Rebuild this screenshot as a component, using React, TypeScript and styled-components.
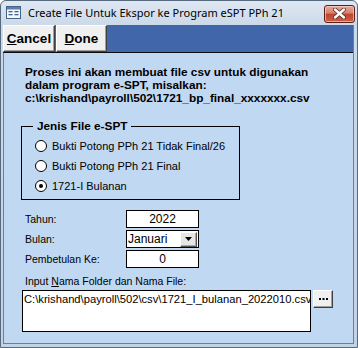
import React from 'react';
import styled, { createGlobalStyle } from 'styled-components';

const Global = createGlobalStyle`
  html, body {
    margin: 0;
    padding: 0;
    background: #ffffff;
  }
  * { box-sizing: border-box; }
`;

const Window = styled.div`
  width: 358px;
  height: 348px;
  border: 1px solid #56697f;
  border-radius: 6px 6px 0 0;
  padding: 0 3px 3px 2px;
  background: linear-gradient(180deg, #dfe8f3 0px, #cbd9e8 24px, #c3d3e4 100%);
  display: flex;
  flex-direction: column;
  font-family: "Liberation Sans", Arial, sans-serif;
`;

const TitleBar = styled.div`
  height: 24px;
  display: flex;
  align-items: center;
  padding: 0 0 1px 3px;
`;

const TitleText = styled.span`
  font-family: "Noto Sans", "Open Sans", sans-serif;
  font-size: 11px;
  color: #000;
  margin-left: 7px;
  flex: 1;
  white-space: nowrap;
`;

const CloseButton = styled.div`
  width: 31px;
  height: 18px;
  margin-top: 2px;
  margin-right: -1px;
  border: 1px solid #5b2019;
  border-radius: 3px;
  background: linear-gradient(180deg, #e8a89a 0%, #d6806f 45%, #c0432e 50%, #cf5e48 100%);
  box-shadow: inset 0 0 0 1px rgba(255, 220, 210, 0.6);
  display: flex;
  align-items: center;
  justify-content: center;
`;

const Client = styled.div`
  flex: 1;
  display: flex;
  flex-direction: column;
  background: #c0d8f1;
  border: 1px solid #6b7f96;
  border-top: none;
`;

const Toolbar = styled.div`
  height: 28px;
  display: flex;
  align-items: stretch;
  background: #4266aa;
  border-bottom: 1px solid #0d0d0d;
  margin-left: -1px;
`;

const ToolButton = styled.button<{ $w: number }>`
  width: ${(p) => p.$w}px;
  height: 27px;
  padding: 0;
  margin: 0 1px 0 0;
  background: #f0f0f0;
  border: 1px solid;
  border-color: #ffffff #404040 #404040 #ffffff;
  box-shadow: inset -1px -1px 0 #a0a0a0;
  font-family: "Liberation Sans", Arial, sans-serif;
  font-weight: bold;
  font-size: 13.5px;
  color: #000;
  u { text-decoration: underline; }
`;

const Content = styled.div`
  padding: 13px 0 0 21px;
  display: flex;
  flex-direction: column;
`;

const Intro = styled.p`
  margin: 0;
  font-weight: bold;
  font-size: 11.8px;
  line-height: 12.8px;
  color: #000;
  white-space: nowrap;
`;

const Group = styled.fieldset`
  margin: 15px 0 0 -4px;
  width: 219px;
  height: 81px;
  padding: 0 0 0 13px;
  border: 1px solid #000;
  display: flex;
  flex-direction: column;
`;

const Legend = styled.legend`
  font-weight: bold;
  font-size: 11.8px;
  padding: 0 4px;
  margin-left: -2px;
  color: #000;
`;

const RadioRow = styled.label`
  height: 20px;
  display: flex;
  align-items: center;
  font-size: 11px;
  color: #000;
  &:first-of-type { margin-top: 3px; }
`;

const RadioDot = styled.span<{ $on?: boolean }>`
  width: 12px;
  height: 12px;
  border-radius: 50%;
  border: 1px solid #000;
  background: #fff;
  margin-right: 5px;
  display: flex;
  align-items: center;
  justify-content: center;
  &::after {
    content: '';
    width: 4px;
    height: 4px;
    border-radius: 50%;
    background: ${(p) => (p.$on ? '#000' : 'transparent')};
  }
`;

const FieldRows = styled.div`
  margin-top: 10px;
  display: flex;
  flex-direction: column;
  gap: 2px;
`;

const FieldRow = styled.div`
  display: flex;
  align-items: center;
  height: 18px;
`;

const FieldLabel = styled.span`
  width: 101px;
  font-size: 10.5px;
  color: #000;
`;

const Box = styled.div<{ $align?: string }>`
  width: 73px;
  height: 18px;
  background: #fff;
  border: 1px solid #000;
  font-size: 12px;
  line-height: 16px;
  color: #000;
  display: flex;
  align-items: center;
  justify-content: ${(p) => (p.$align === 'left' ? 'space-between' : 'center')};
  padding-left: ${(p) => (p.$align === 'left' ? '1px' : '0')};
`;

const DropBtn = styled.span`
  width: 17px;
  height: 15px;
  margin-right: 1px;
  background: #e6e6e6;
  border: 1px solid;
  border-color: #ffffff #555555 #555555 #ffffff;
  box-shadow: inset -1px -1px 0 #a8a8a8;
  display: flex;
  align-items: center;
  justify-content: center;
`;

const PathLabel = styled.div`
  margin-top: 7px;
  font-size: 10.5px;
  color: #000;
`;

const PathRow = styled.div`
  margin: 3px 0 0 -3px;
  display: flex;
  align-items: flex-start;
  gap: 2px;
`;

const PathBox = styled.div`
  width: 289px;
  height: 42px;
  background: #fff;
  border: 1px solid #000;
  font-size: 11.2px;
  line-height: 16px;
  padding-left: 1px;
  white-space: nowrap;
  overflow: hidden;
  color: #000;
`;

const BrowseButton = styled.button`
  width: 20px;
  height: 18px;
  padding: 0;
  background: #f0f0f0;
  border: 1px solid;
  border-color: #ffffff #404040 #404040 #ffffff;
  box-shadow: inset -1px -1px 0 #a0a0a0;
  display: flex;
  align-items: center;
  justify-content: center;
`;

const WindowIcon = () => (
  <svg width="15" height="13" viewBox="0 0 15 13">
    <rect x="0.5" y="0.5" width="14" height="12" fill="#f4f7fb" stroke="#44628c" />
    <rect x="1" y="1" width="13" height="2.5" fill="#5d7fae" />
    <rect x="2.5" y="5" width="4" height="1.3" fill="#44628c" />
    <rect x="8.5" y="5" width="4" height="1.3" fill="#44628c" />
    <rect x="2.5" y="8" width="4" height="1.3" fill="#44628c" />
    <rect x="8.5" y="8" width="4" height="1.3" fill="#44628c" />
  </svg>
);

const CloseX = () => (
  <svg width="13" height="11" viewBox="0 0 13 11">
    <path d="M2 1.5 L11 9.5 M11 1.5 L2 9.5" stroke="#5a2a22" strokeWidth="4" strokeLinecap="round" />
    <path d="M2 1.5 L11 9.5 M11 1.5 L2 9.5" stroke="#ffffff" strokeWidth="2.4" strokeLinecap="round" />
  </svg>
);

const DownArrow = () => (
  <svg width="7" height="4" viewBox="0 0 7 4">
    <path d="M0 0 H7 L3.5 4 Z" fill="#000" />
  </svg>
);

const Ellipsis = () => (
  <svg width="9" height="3" viewBox="0 0 9 3">
    <rect x="0" y="0" width="2" height="2" fill="#000" />
    <rect x="3.5" y="0" width="2" height="2" fill="#000" />
    <rect x="7" y="0" width="2" height="2" fill="#000" />
  </svg>
);

export default function App() {
  return (
    <>
      <Global />
      <Window>
        <TitleBar>
          <WindowIcon />
          <TitleText>Create File Untuk Ekspor ke Program eSPT PPh 21</TitleText>
          <CloseButton>
            <CloseX />
          </CloseButton>
        </TitleBar>
        <Client>
          <Toolbar>
            <ToolButton $w={52}><u>C</u>ancel</ToolButton>
            <ToolButton $w={51}><u>D</u>one</ToolButton>
          </Toolbar>
          <Content>
            <Intro>
              Proses ini akan membuat file csv untuk digunakan<br />
              dalam program e-SPT, misalkan:<br />
              c:\krishand\payroll\502\1721_bp_final_xxxxxxx.csv
            </Intro>
            <Group>
              <Legend>Jenis File e-SPT</Legend>
              <RadioRow><RadioDot />Bukti Potong PPh 21 Tidak Final/26</RadioRow>
              <RadioRow><RadioDot />Bukti Potong PPh 21 Final</RadioRow>
              <RadioRow><RadioDot $on />1721-I Bulanan</RadioRow>
            </Group>
            <FieldRows>
              <FieldRow>
                <FieldLabel>Tahun:</FieldLabel>
                <Box>2022</Box>
              </FieldRow>
              <FieldRow>
                <FieldLabel>Bulan:</FieldLabel>
                <Box $align="left">
                  Januari
                  <DropBtn><DownArrow /></DropBtn>
                </Box>
              </FieldRow>
              <FieldRow>
                <FieldLabel>Pembetulan Ke:</FieldLabel>
                <Box>0</Box>
              </FieldRow>
            </FieldRows>
            <PathLabel>Input <u>N</u>ama Folder dan Nama File:</PathLabel>
            <PathRow>
              <PathBox>C:\krishand\payroll\502\csv\1721_I_bulanan_2022010.csv</PathBox>
              <BrowseButton aria-label="browse"><Ellipsis /></BrowseButton>
            </PathRow>
          </Content>
        </Client>
      </Window>
    </>
  );
}
